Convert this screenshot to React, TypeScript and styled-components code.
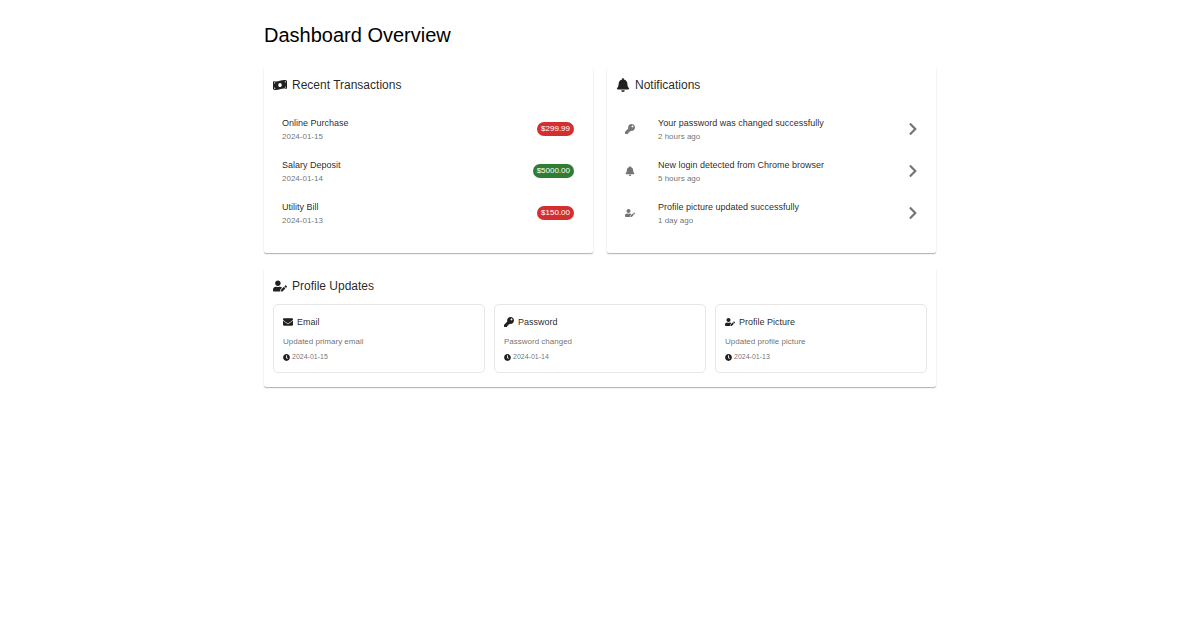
import React from 'react';
import styled, { createGlobalStyle } from 'styled-components';
import {
  FaBell,
  FaChevronRight,
  FaClock,
  FaEnvelope,
  FaKey,
  FaMoneyBillWave,
  FaUserEdit,
} from 'react-icons/fa';
import type { IconType } from 'react-icons';

const GlobalStyle = createGlobalStyle`
  *, *::before, *::after { box-sizing: border-box; }
  body {
    margin: 0;
    background: #fff;
    color: rgba(0, 0, 0, 0.87);
    font-family: "Liberation Sans", Arial, sans-serif;
  }
  h1, h2, h3, p, ul { margin: 0; padding: 0; font-weight: 400; }
  ul { list-style: none; }
  svg { display: block; flex: none; }
`;

const Page = styled.main`
  max-width: 700px;
  margin: 0 auto;
  padding: 23px 14px;
`;

const PageTitle = styled.h1`
  margin-bottom: 19px;
  color: #000;
  font-size: 20px;
  line-height: 25px;
`;

const Panels = styled.div`
  display: grid;
  grid-template-columns: repeat(2, minmax(0, 1fr));
  gap: 15px 14px;
  @media (max-width: 560px) {
    grid-template-columns: minmax(0, 1fr);
  }
`;

const Panel = styled.section<{ $wide?: boolean }>`
  grid-column: ${(p) => (p.$wide ? '1 / -1' : 'auto')};
  padding: 9px 9px 14px;
  border-radius: 2px;
  background: #fff;
  box-shadow: 0 1px 1px -1px rgba(0, 0, 0, 0.4), 0 1px 1px rgba(0, 0, 0, 0.2),
    0 1px 2px rgba(0, 0, 0, 0.1);
`;

const PanelHeader = styled.header`
  display: flex;
  align-items: center;
  gap: 5px;
  margin-bottom: 9px;
  font-size: 14px;
`;

const PanelTitle = styled.h2`
  font-size: 12px;
  line-height: 18px;
`;

const List = styled.ul`
  padding: 5px 0;
`;

const Row = styled.li`
  display: flex;
  align-items: center;
  height: 42px;
  padding: 0 10px 0 9px;
`;

const RowIcon = styled.span`
  width: 33px;
  color: rgba(0, 0, 0, 0.54);
  font-size: 10px;
`;

const RowText = styled.div`
  flex: 1;
  min-width: 0;
`;

const Primary = styled.p`
  font-size: 9px;
  line-height: 16px;
`;

const Secondary = styled.p`
  color: rgba(0, 0, 0, 0.6);
  font-size: 8px;
  line-height: 12px;
`;

const Chip = styled.span<{ $credit: boolean }>`
  padding: 0 4px;
  border-radius: 7px;
  background: ${(p) => (p.$credit ? '#2e7d32' : '#d32f2f')};
  color: #fff;
  font-size: 8px;
  line-height: 14px;
`;

const OpenButton = styled.button`
  margin-right: -3px;
  padding: 0;
  border: 0;
  background: none;
  color: rgba(0, 0, 0, 0.54);
  font-size: 14px;
  cursor: pointer;
`;

const Updates = styled.div`
  display: grid;
  grid-template-columns: repeat(3, minmax(0, 1fr));
  gap: 9px;
`;

const UpdateCard = styled.article`
  padding: 9px;
  border: 1px solid #e7e7e7;
  border-radius: 5px;
`;

const UpdateHeader = styled.div`
  display: flex;
  align-items: center;
  gap: 4px;
  margin-bottom: 6px;
  font-size: 10px;
`;

const UpdateTitle = styled.h3`
  font-size: 9px;
  line-height: 16px;
`;

const UpdateDate = styled.div`
  display: flex;
  align-items: center;
  gap: 2px;
  margin-top: 3px;
  font-size: 7px;
  line-height: 12px;
`;

const DateText = styled.time`
  color: rgba(0, 0, 0, 0.6);
`;

const transactions = [
  { name: 'Online Purchase', date: '2024-01-15', amount: '$299.99', credit: false },
  { name: 'Salary Deposit', date: '2024-01-14', amount: '$5000.00', credit: true },
  { name: 'Utility Bill', date: '2024-01-13', amount: '$150.00', credit: false },
];

const notifications: { icon: IconType; text: string; time: string }[] = [
  { icon: FaKey, text: 'Your password was changed successfully', time: '2 hours ago' },
  { icon: FaBell, text: 'New login detected from Chrome browser', time: '5 hours ago' },
  { icon: FaUserEdit, text: 'Profile picture updated successfully', time: '1 day ago' },
];

const updates: { icon: IconType; title: string; detail: string; date: string }[] = [
  { icon: FaEnvelope, title: 'Email', detail: 'Updated primary email', date: '2024-01-15' },
  { icon: FaKey, title: 'Password', detail: 'Password changed', date: '2024-01-14' },
  { icon: FaUserEdit, title: 'Profile Picture', detail: 'Updated profile picture', date: '2024-01-13' },
];

export default function App() {
  return (
    <>
      <GlobalStyle />
      <Page>
        <PageTitle>Dashboard Overview</PageTitle>
        <Panels>
          <Panel>
            <PanelHeader>
              <FaMoneyBillWave />
              <PanelTitle>Recent Transactions</PanelTitle>
            </PanelHeader>
            <List>
              {transactions.map((t) => (
                <Row key={t.name}>
                  <RowText>
                    <Primary>{t.name}</Primary>
                    <Secondary>{t.date}</Secondary>
                  </RowText>
                  <Chip $credit={t.credit}>{t.amount}</Chip>
                </Row>
              ))}
            </List>
          </Panel>

          <Panel>
            <PanelHeader>
              <FaBell />
              <PanelTitle>Notifications</PanelTitle>
            </PanelHeader>
            <List>
              {notifications.map(({ icon: Icon, text, time }) => (
                <Row key={text}>
                  <RowIcon>
                    <Icon />
                  </RowIcon>
                  <RowText>
                    <Primary>{text}</Primary>
                    <Secondary>{time}</Secondary>
                  </RowText>
                  <OpenButton type="button" aria-label={`Open: ${text}`}>
                    <FaChevronRight />
                  </OpenButton>
                </Row>
              ))}
            </List>
          </Panel>

          <Panel $wide>
            <PanelHeader>
              <FaUserEdit />
              <PanelTitle>Profile Updates</PanelTitle>
            </PanelHeader>
            <Updates>
              {updates.map(({ icon: Icon, title, detail, date }) => (
                <UpdateCard key={title}>
                  <UpdateHeader>
                    <Icon />
                    <UpdateTitle>{title}</UpdateTitle>
                  </UpdateHeader>
                  <Secondary>{detail}</Secondary>
                  <UpdateDate>
                    <FaClock />
                    <DateText dateTime={date}>{date}</DateText>
                  </UpdateDate>
                </UpdateCard>
              ))}
            </Updates>
          </Panel>
        </Panels>
      </Page>
    </>
  );
}
